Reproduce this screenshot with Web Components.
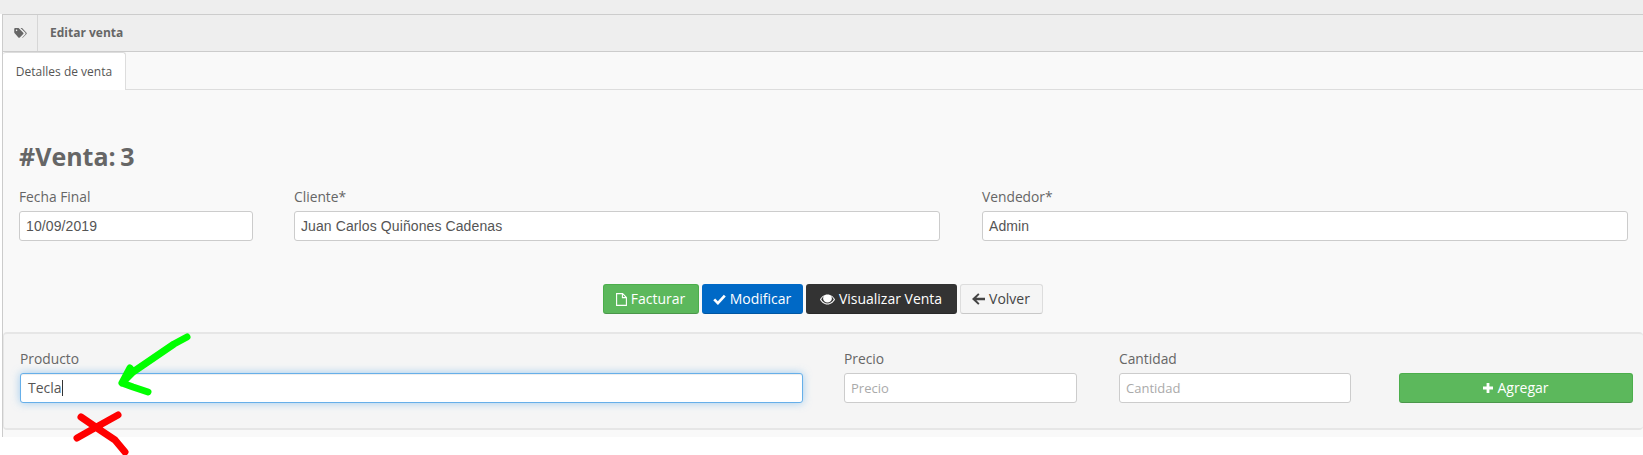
<!DOCTYPE html>
<html>
<head>
<meta charset="utf-8">
<style>
html, body { margin: 0; padding: 0; background: #fff; }
body { width: 1643px; height: 455px; overflow: hidden; position: relative; font-family: "Open Sans", sans-serif; color: #555; }
</style>
</head>
<body>
<script>
const ICONS = {
  tags: ['0 0 16 14', '<path fill="currentColor" d="M0 1.2C0 .5.5 0 1.2 0h3.6c.5 0 1 .2 1.4.6l5.3 5.3c.5.5.5 1.3 0 1.8l-4.4 4.4c-.5.5-1.3.5-1.8 0L.6 6.8C.2 6.4 0 5.9 0 5.4zM3 2a1 1 0 1 0 0 2 1 1 0 0 0 0-2zM8 0h1.2c.5 0 1 .2 1.4.6l5 5.3c.5.5.5 1.3 0 1.8l-4.4 4.4c-.3.3-.8.5-1.2.4l4-4.1c.7-.7.7-1.9 0-2.6z"/>'],
  file: ['0 0 11 13', '<path fill="none" stroke="currentColor" stroke-width="1.1" d="M.6.6h6l3.8 3.8v8H.6zM6.4.6v4h4"/>'],
  check: ['0 0 13 11', '<path fill="none" stroke="currentColor" stroke-width="2.7" d="M1.2 5.4l3.7 3.7 6.9-7.4"/>'],
  eye: ['0 0 15 11', '<path fill="currentColor" fill-rule="evenodd" d="M7.5.5C11 .5 13.7 3 15 5.5 13.7 8 11 10.5 7.5 10.5S1.3 8 0 5.5C1.3 3 4 .5 7.5.5zM3.8 2.2C2.7 2.9 1.8 4.1 1.2 5.5 2.4 7.8 4.8 9.5 7.5 9.5s5.100-1.700 6.300-4c-.6-1.400-1.500-2.600-2.600-3.300.4.600.7 1.400.7 2.300 0 2.300-1.900 4-4.400 4S3.100 6.800 3.100 4.500c0-.9.300-1.700.7-2.300z"/>'],
  back: ['0 0 13 12', '<path fill="currentColor" d="M6.200.3l1.300 1.300L4.300 4.700H13v2.600H4.300l3.200 3.100-1.300 1.300L0 6z"/>'],
  plus: ['0 0 10 10', '<path fill="currentColor" d="M3.600 0h2.800v3.600H10v2.800H6.400V10H3.600V6.400H0V3.600h3.600z"/>']
};

class AppIcon extends HTMLElement {
  connectedCallback() {
    const [box, body] = ICONS[this.getAttribute('name')];
    const w = this.getAttribute('w') || 12;
    const h = this.getAttribute('h') || 12;
    this.attachShadow({ mode: 'open' }).innerHTML = `
      <style>:host { display: inline-flex; align-items: center; } svg { display: block; }</style>
      <svg width="${w}" height="${h}" viewBox="${box}">${body}</svg>`;
  }
}

class PanelHead extends HTMLElement {
  connectedCallback() {
    this.attachShadow({ mode: 'open' }).innerHTML = `
      <style>
        :host { display: flex; height: 36px; background: #eee; border-top: 1px solid #ccc; border-bottom: 1px solid #ccc; }
        .ico { width: 34px; display: flex; align-items: center; justify-content: center; border-right: 1px solid #d6d6d6; color: #666; }
        .ttl { padding-left: 12px; font: 700 12px/36px "Open Sans", sans-serif; color: #666; }
      </style>
      <div class="ico"><slot name="icon"></slot></div>
      <div class="ttl"><slot></slot></div>`;
  }
}

class TabBar extends HTMLElement {
  connectedCallback() {
    this.attachShadow({ mode: 'open' }).innerHTML = `
      <style>
        :host { display: flex; height: 37px; border-bottom: 1px solid #ddd; }
        .tab { width: 122px; height: 37px; margin-bottom: -1px; background: #fff; border: solid #ddd; border-width: 1px 1px 0 0; border-radius: 3px 3px 0 0; font: 12px/37px "Open Sans", sans-serif; color: #555; text-align: center; }
      </style>
      <div class="tab"><slot></slot></div>`;
  }
}

class FormField extends HTMLElement {
  connectedCallback() {
    const value = this.getAttribute('value') || '';
    const ph = this.getAttribute('placeholder') || '';
    const focus = this.hasAttribute('focused');
    this.attachShadow({ mode: 'open' }).innerHTML = `
      <style>
        :host { display: block; }
        label { display: block; height: 22px; font: 13.8px/16px "Open Sans", sans-serif; color: #666; }
        .box { height: 30px; box-sizing: border-box; background: #fff; border: 1px solid #ccc; border-radius: 3px; padding: 0 6px; font: 14px/28px "Liberation Sans", Arial, sans-serif; letter-spacing: .1px; color: #555; white-space: nowrap; }
        .ph { color: #aaa; font-family: "Open Sans", sans-serif; font-size: 13px; letter-spacing: 0; }
        .focus { border-color: #66afe9; padding-left: 7px; box-shadow: inset 0 1px 1px rgba(0,0,0,.075), 0 0 8px rgba(102,175,233,.6); font-family: "Open Sans", sans-serif; letter-spacing: 0; }
        .caret { display: inline-block; width: 1px; height: 16px; background: #333; vertical-align: -3px; }
      </style>
      <label><slot></slot></label>
      <div class="box ${focus ? 'focus' : ''}">${value ? `<span>${value}</span>` : `<span class="ph">${ph}</span>`}${focus ? '<span class="caret"></span>' : ''}</div>`;
  }
}

class ActionButton extends HTMLElement {
  connectedCallback() {
    const tones = {
      success: ['#5cb85c', '#4cae4c', '#fff'],
      primary: ['#0069c6', '#0069c6', '#fff'],
      dark: ['#333', '#333', '#fff'],
      light: ['#f5f5f5', '#ddd', '#444']
    };
    const [bg, bd, fg] = tones[this.getAttribute('tone')];
    this.attachShadow({ mode: 'open' }).innerHTML = `
      <style>
        :host { display: flex; align-items: center; justify-content: center; gap: 4px; height: 30px; box-sizing: border-box; background: ${bg}; border: 1px solid ${bd}; border-bottom-color: rgba(0,0,0,.18); border-radius: 3px; color: ${fg}; font: 14px/1 "Open Sans", sans-serif; }
      </style>
      <slot name="icon"></slot><slot></slot>`;
  }
}

class ScribbleMarks extends HTMLElement {
  connectedCallback() {
    this.attachShadow({ mode: 'open' }).innerHTML = `
      <style>:host { position: absolute; left: 0; top: 0; width: 1643px; height: 455px; pointer-events: none; }</style>
      <svg width="1643" height="455" fill="none" stroke-linecap="round" stroke-linejoin="round">
        <path stroke="#00ff00" stroke-width="7" d="M187 337L174 344L133 372L122 383M130 368L122 383L133 387L148 392"/>
        <path stroke="#ff0000" stroke-width="7" d="M118 415L100 425L77 438M81 417L100 430L115 440L125 452"/>
      </svg>`;
  }
}

class SalePage extends HTMLElement {
  connectedCallback() {
    this.attachShadow({ mode: 'open' }).innerHTML = `
      <style>
        :host { display: block; background: #fff; }
        .top { height: 14px; background: #eee; }
        .frame { margin-left: 2px; border-left: 1px solid #ccc; background: #f9f9f9; height: 423px; }
        .body { padding: 0 15px 0 16px; }
        h2 { margin: 0; padding-top: 50px; height: 42px; font: 700 25px/33px "Open Sans", sans-serif; word-spacing: -2px; color: #666; }
        .row1 { display: grid; grid-template-columns: 234px 646px 647px; column-gap: 41px; margin-top: 7px; }
        .actions { display: flex; justify-content: center; gap: 3px; margin-top: 43px; padding-right: 2px; }
        .add { margin-top: 18px; height: 98px; background: #f5f5f5; border: 2px solid #e6e6e6; border-width: 2px 0 2px 1px; border-radius: 4px; box-sizing: border-box; padding: 17px 10px 0 16px; display: grid; grid-template-columns: 783px 233px 233px 241px; column-gap: 41px; align-content: start; align-items: end; }
      </style>
      <div class="top"></div>
      <div class="frame">
        <panel-head><app-icon slot="icon" name="tags" w="13" h="11"></app-icon>Editar venta</panel-head>
        <tab-bar>Detalles de venta</tab-bar>
        <div class="body">
          <h2>#Venta: 3</h2>
          <div class="row1">
            <form-field value="10/09/2019">Fecha Final</form-field>
            <form-field value="Juan Carlos Quiñones Cadenas">Cliente*</form-field>
            <form-field value="Admin" style="margin-left:1px">Vendedor*</form-field>
          </div>
          <div class="actions">
            <action-button tone="success" style="width:96px"><app-icon slot="icon" name="file" w="11" h="13"></app-icon>Facturar</action-button>
            <action-button tone="primary" style="width:101px"><app-icon slot="icon" name="check" w="13" h="11"></app-icon>Modificar</action-button>
            <action-button tone="dark" style="width:151px"><app-icon slot="icon" name="eye" w="15" h="11"></app-icon>Visualizar Venta</action-button>
            <action-button tone="light" style="width:83px"><app-icon slot="icon" name="back" w="13" h="12"></app-icon>Volver</action-button>
          </div>
        </div>
        <div class="add">
          <form-field value="Tecla" focused>Producto</form-field>
          <form-field placeholder="Precio">Precio</form-field>
          <form-field placeholder="Cantidad" style="margin-left:1px">Cantidad</form-field>
          <action-button tone="success" style="margin-left:7px"><app-icon slot="icon" name="plus" w="10" h="10"></app-icon>Agregar</action-button>
        </div>
      </div>`;
  }
}

customElements.define('app-icon', AppIcon);
customElements.define('panel-head', PanelHead);
customElements.define('tab-bar', TabBar);
customElements.define('form-field', FormField);
customElements.define('action-button', ActionButton);
customElements.define('scribble-marks', ScribbleMarks);
customElements.define('sale-page', SalePage);
</script>
<sale-page></sale-page>
<scribble-marks></scribble-marks>
</body>
</html>
